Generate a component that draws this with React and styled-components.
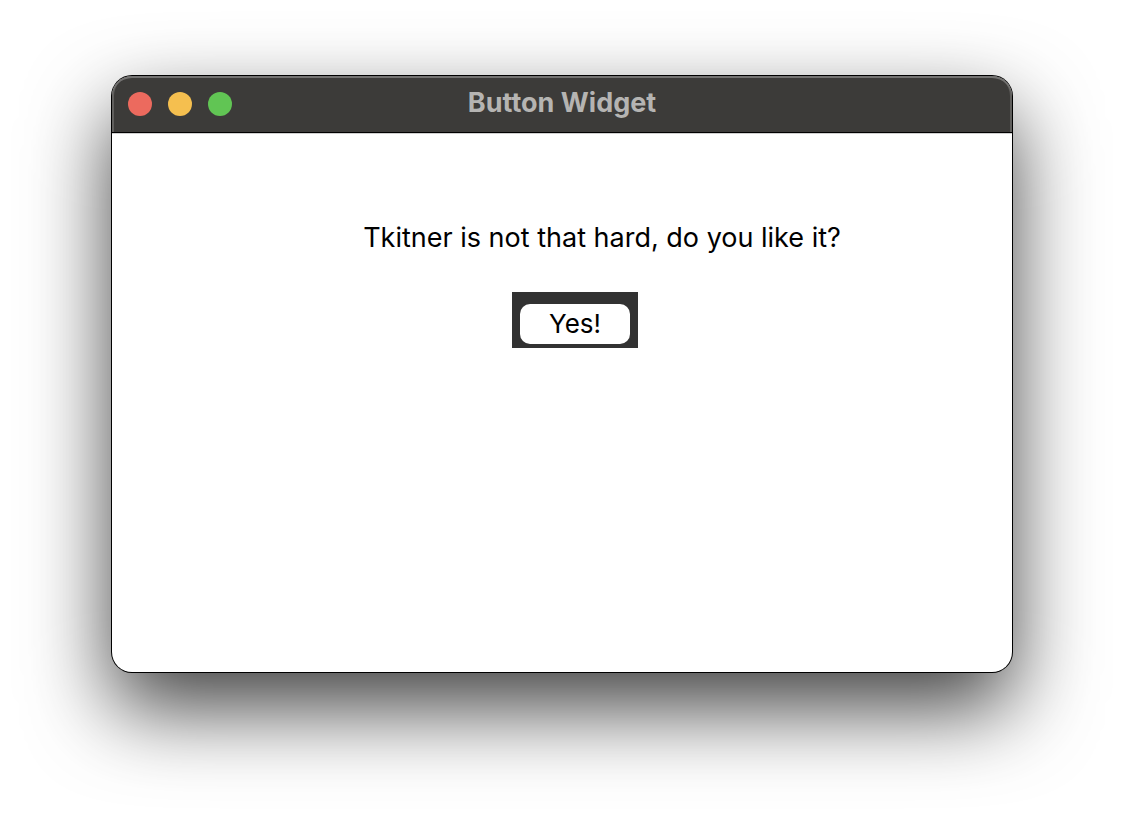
import styled, { createGlobalStyle } from 'styled-components';

export default function App() {
  return (
    <Desktop>
      <GlobalStyle/>
      <Window>
        <TitleBar>
          <Controls>
            <Control aria-label="Close" color="#EC6A5E"/>
            <Control aria-label="Minimize" color="#F5BF4F"/>
            <Control aria-label="Zoom" color="#61C554"/>
          </Controls>
          <Title>Button Widget</Title>
        </TitleBar>
        <Content>
          <Question>Tkitner is not that hard, do you like it?</Question>
          <ButtonFrame>
            <Button>Yes!</Button>
          </ButtonFrame>
        </Content>
      </Window>
    </Desktop>
  );
}

const GlobalStyle = createGlobalStyle`
* {
  box-sizing: border-box;
}
body {
  margin: 0;
  background-color: #FFFFFF;
  font-family: Inter, sans-serif;
}
`;

const Desktop = styled.main`
min-height: 100vh;
padding: 76px 112px 148px;
display: flex;
overflow: hidden;
`;

const Window = styled.section`
flex: 1;
display: flex;
flex-direction: column;
border-radius: 20px;
background-color: #FFFFFF;
box-shadow: 0 0 0 1px #000000, 0 36px 84px rgba(0, 0, 0, 0.75);
`;

const TitleBar = styled.header`
height: 57px;
padding: 0 16px 2px;
display: grid;
grid-template-columns: 1fr auto 1fr;
align-items: center;
border-radius: 20px 20px 0 0;
border-bottom: 1px solid #000000;
background-color: #3C3B39;
box-shadow: inset 0 2px 0 #747372, inset 2px 0 0 #605F5D, inset -2px 0 0 #605F5D;
`;

const Controls = styled.div`
padding-top: 2px;
display: flex;
gap: 16px;
`;

const Control = styled.button`
width: 24px;
height: 24px;
padding: 0;
border: none;
border-radius: 50%;
background-color: ${props => props.color};
`;

const Title = styled.h1`
margin: 0;
font-size: 27px;
font-weight: 700;
line-height: 32px;
color: #B5B4B2;
`;

const Content = styled.div`
flex: 1;
padding: 88px 0 0 26px;
display: flex;
flex-direction: column;
align-items: center;
border-top: 1px solid #D0D0D0;
border-radius: 0 0 20px 20px;
`;

const Question = styled.p`
margin: 0 0 38px 54px;
font-size: 27px;
line-height: 32px;
color: #000000;
`;

const ButtonFrame = styled.div`
padding: 12px 8px 4px;
background-color: #323232;
`;

const Button = styled.button`
display: block;
width: 110px;
height: 40px;
padding: 0;
border: none;
border-radius: 10px;
background-color: #FFFFFF;
font-family: inherit;
font-size: 26px;
line-height: 38px;
color: #000000;
`;
